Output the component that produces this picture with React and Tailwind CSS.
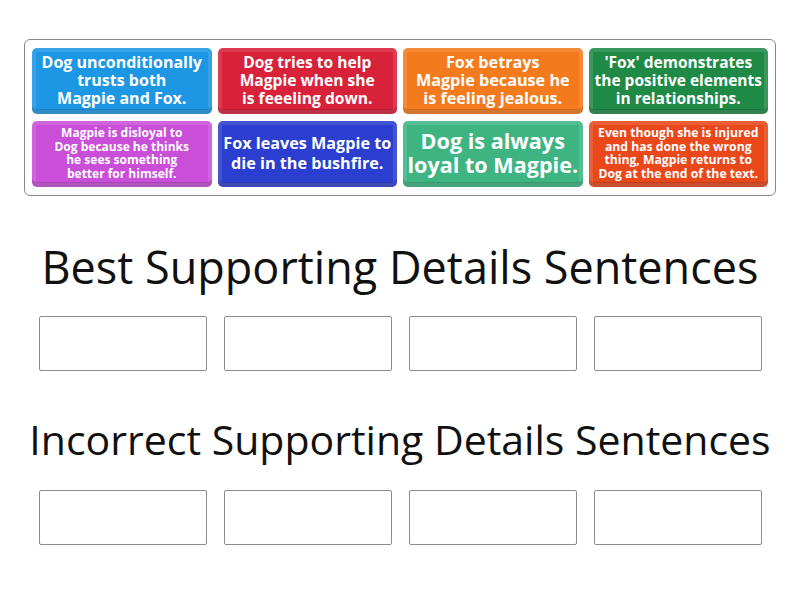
const TILES = [
  {
    lines: ["Dog unconditionally", "trusts both", "Magpie and Fox."],
    color: "bg-[#1d96e4]",
    size: "text-[16px] leading-[18px]",
  },
  {
    lines: ["Dog tries to help", "Magpie when she", "is feeeling down."],
    color: "bg-[#d8223a]",
    size: "text-[15.6px] leading-[18px]",
  },
  {
    lines: ["Fox betrays", "Magpie because he", "is feeling jealous."],
    color: "bg-[#f47b1d]",
    size: "text-[16.2px] leading-[18px]",
  },
  {
    lines: ["'Fox' demonstrates", "the positive elements", "in relationships."],
    color: "bg-[#1f8a46]",
    size: "text-[15.5px] leading-[18px]",
  },
  {
    lines: [
      "Magpie is disloyal to",
      "Dog because he thinks",
      "he sees something",
      "better for himself.",
    ],
    color: "bg-[#c94fd9]",
    size: "text-[12px] leading-[13.5px]",
  },
  {
    lines: ["Fox leaves Magpie to", "die in the bushfire."],
    color: "bg-[#2b3ecf]",
    size: "text-[16.2px] leading-[20px]",
  },
  {
    lines: ["Dog is always", "loyal to Magpie."],
    color: "bg-[#3db482]",
    size: "text-[21.6px] leading-[24px]",
  },
  {
    lines: [
      "Even though she is injured",
      "and has done the wrong",
      "thing, Magpie returns to",
      "Dog at the end of the text.",
    ],
    color: "bg-[#e8481a]",
    size: "text-[12.2px] leading-[13.5px]",
  },
];

export default function App() {
  return (
    <div
      className="h-[600px] w-[800px] bg-white text-black"
      style={{ fontFamily: '"Open Sans", Arial, sans-serif' }}
    >
      <div className="px-[24px] pt-[39px]">
        <div className="grid grid-cols-4 gap-x-[6px] gap-y-[7px] rounded-[6px] border border-[#8a8a8a] px-[7px] py-[8px]">
          {TILES.map((tile, index) => (
            <Tile key={index} {...tile} />
          ))}
        </div>
      </div>

      <Section
        title="Best Supporting Details Sentences"
        className="mt-[40px]"
        heading="text-[45px] leading-[61px]"
        gap="mt-[19px]"
      />

      <Section
        title="Incorrect Supporting Details Sentences"
        className="mt-[40px]"
        heading="text-[41px] leading-[56px]"
        gap="mt-[23px]"
      />
    </div>
  );
}

function Tile({ lines, color, size }) {
  return (
    <div
      className={`flex h-[66px] items-center justify-center rounded-[5px] px-1 text-center font-bold text-white ${color} ${size} shadow-[inset_0_-5px_0_rgba(0,0,0,0.14),inset_0_0_0_4px_rgba(255,255,255,0.12)]`}
    >
      <p className="pb-[2px]">
        {lines.map((line, i) => (
          <span key={i} className="block whitespace-nowrap">
            {line}
          </span>
        ))}
      </p>
    </div>
  );
}

function Section({ title, className, heading, gap }) {
  return (
    <div className={className}>
      <h2 className={`text-center text-[#111] ${heading}`}>
        {title}
      </h2>

      <div className={`flex justify-center gap-[17px] ${gap}`}>
        {[0, 1, 2, 3].map((i) => (
          <div
            key={i}
            className="h-[55px] w-[168px] rounded-[2px] border border-[#8c8c8c] bg-white"
          />
        ))}
      </div>
    </div>
  );
}
